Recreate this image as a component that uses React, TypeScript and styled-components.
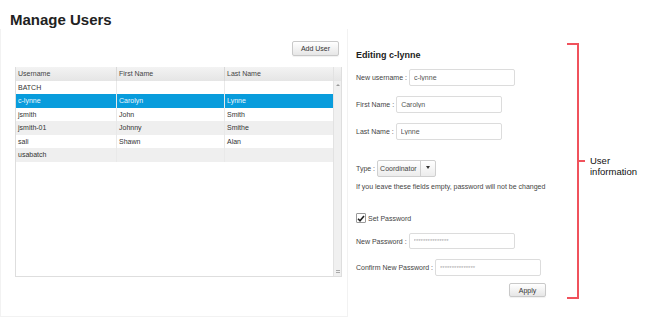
import styled, { createGlobalStyle } from "styled-components";

const GlobalStyle = createGlobalStyle`
  html, body {
    margin: 0;
    padding: 0;
    background: #fff;
  }
  body {
    font-family: "Liberation Sans", Arial, sans-serif;
    color: #333;
  }
  * {
    box-sizing: border-box;
  }
`;

const Page = styled.div`
  width: 653px;
  height: 317px;
  padding-top: 11px;
  overflow: hidden;
`;

const PageTitle = styled.h1`
  margin: 0 0 0 10px;
  font-size: 15px;
  line-height: 18px;
  font-weight: 700;
  color: #222;
`;

const Main = styled.div`
  display: flex;
  align-items: flex-start;
`;

const LeftPanel = styled.section`
  width: 348px;
  height: 288px;
  padding: 12px 7px 0 14px;
  border: 1px solid #f2f2f2;
  border-top: none;
`;

const Toolbar = styled.div`
  display: flex;
  justify-content: flex-end;
  padding-right: 1px;
  margin-bottom: 11px;
`;

const GreyButton = styled.button`
  height: ${(p) => p.$h || 15}px;
  width: ${(p) => p.$w}px;
  padding: 0;
  font-family: inherit;
  font-size: 7px;
  color: #333;
  background: linear-gradient(#ffffff, #e6e6e6);
  border: 1px solid #c9c9c9;
  border-radius: 2px;
  box-shadow: 0 1px 1px rgba(0, 0, 0, 0.06);
`;

const TableBox = styled.div`
  display: flex;
  width: 327px;
  height: 210px;
  border: 1px solid #dedede;
  border-top: none;
`;

const Grid = styled.div`
  width: 317px;
  display: flex;
  flex-direction: column;
`;

const Row = styled.div`
  display: grid;
  grid-template-columns: 101px 108px 108px;
  height: 13.5px;
  background: ${(p) =>
    p.$selected ? "#089cdc" : p.$odd ? "#efefef" : "#ffffff"};
  color: ${(p) => (p.$selected ? "#eaf6fc" : "#333")};
`;

const HeaderRow = styled(Row)`
  height: 13.7px;
  background: linear-gradient(#f3f3f3, #e5e5e5);
  color: #444;
`;

const Cell = styled.div`
  font-size: 7px;
  line-height: 13.5px;
  padding-left: 2px;
  white-space: nowrap;
  overflow: hidden;
  border-right: 1px solid ${(p) => (p.$head ? "#d9d9d9" : "#e9e9e9")};
  &:last-child {
    border-right: none;
  }
`;

const Scrollbar = styled.div`
  position: relative;
  width: 9px;
  background: #f0f0f0;
  border-left: 1px solid #e2e2e2;
`;

const ScrollTop = styled.div`
  height: 13.7px;
  background: linear-gradient(#f3f3f3, #e5e5e5);
`;

const ScrollArrowUp = styled.div`
  margin: 3px auto 0;
  width: 0;
  height: 0;
  border-left: 2px solid transparent;
  border-right: 2px solid transparent;
  border-bottom: 2px solid #999;
`;

const ScrollCorner = styled.div`
  position: absolute;
  left: 2px;
  bottom: 3px;
  width: 4px;
  height: 3px;
  border-top: 1px solid #aaa;
  border-bottom: 1px solid #aaa;
`;

const RightPanel = styled.section`
  width: 219px;
  padding: 20px 0 0 8px;
  display: flex;
  flex-direction: column;
`;

const Heading = styled.h2`
  margin: 0;
  font-size: 9px;
  line-height: 12px;
  font-weight: 700;
  color: #222;
`;

const FieldRow = styled.div`
  display: flex;
  align-items: center;
  gap: 2px;
  margin-top: ${(p) => p.$top}px;
  height: ${(p) => p.$h || 17}px;
  font-size: 7px;
  color: #444;
`;

const TextInput = styled.input`
  width: 106px;
  height: ${(p) => p.$h || 17}px;
  padding: 0 0 0 4px;
  font-family: inherit;
  font-size: ${(p) => (p.$secret ? 6 : 7)}px;
  color: ${(p) => (p.$secret ? "#aaa" : "#555")};
  border: 1px solid #dcdcdc;
  border-radius: 2px;
  outline: none;
  background: #fff;
`;

const Select = styled.div`
  display: flex;
  height: 17px;
  border: 1px solid #cfcfcf;
  border-radius: 2px;
  background: linear-gradient(#ffffff, #ececec);
`;

const SelectValue = styled.span`
  width: 42px;
  padding-left: 2px;
  line-height: 15px;
  color: #444;
`;

const SelectArrow = styled.span`
  width: 15px;
  border-left: 1px solid #cfcfcf;
  display: flex;
  justify-content: center;
  padding-top: 5px;
  &::after {
    content: "";
    width: 0;
    height: 0;
    border-left: 2.5px solid transparent;
    border-right: 2.5px solid transparent;
    border-top: 3px solid #333;
  }
`;

const Hint = styled.p`
  margin: 5px 0 0;
  font-size: 7px;
  line-height: 10px;
  color: #444;
`;

const CheckBox = styled.span`
  width: 10px;
  height: 10px;
  border: 1px solid #9a9a9a;
  border-radius: 1px;
  background: #fff;
  display: flex;
  align-items: center;
  justify-content: center;
`;

const Actions = styled.div`
  display: flex;
  justify-content: flex-end;
  margin-top: 7px;
  padding-right: 21px;
`;

const Annotation = styled.div`
  display: flex;
  align-items: flex-start;
  margin-top: 14px;
`;

const Bracket = styled.div`
  position: relative;
  width: 12px;
  height: 256px;
  border: 2px solid #f0525c;
  border-left: none;
  &::after {
    content: "";
    position: absolute;
    right: -8px;
    top: 115px;
    width: 6px;
    height: 2px;
    background: #f0525c;
  }
`;

const AnnotationLabel = styled.div`
  margin: 113px 0 0 11px;
  font-size: 9.5px;
  line-height: 10.5px;
  color: #111;
`;

const users = [
  { username: "BATCH", first: "", last: "" },
  { username: "c-lynne", first: "Carolyn", last: "Lynne" },
  { username: "jsmith", first: "John", last: "Smith" },
  { username: "jsmith-01", first: "Johnny", last: "Smithe" },
  { username: "sali", first: "Shawn", last: "Alan" },
  { username: "usabatch", first: "", last: "" },
];

const secret = "***************";

export default function App() {
  return (
    <Page>
      <GlobalStyle />
      <PageTitle>Manage Users</PageTitle>
      <Main>
        <LeftPanel>
          <Toolbar>
            <GreyButton $w={47}>Add User</GreyButton>
          </Toolbar>
          <TableBox>
            <Grid>
              <HeaderRow>
                <Cell $head>Username</Cell>
                <Cell $head>First Name</Cell>
                <Cell $head>Last Name</Cell>
              </HeaderRow>
              {users.map((u, i) => (
                <Row key={u.username} $odd={i % 2 === 1} $selected={u.username === "c-lynne"}>
                  <Cell>{u.username}</Cell>
                  <Cell>{u.first}</Cell>
                  <Cell>{u.last}</Cell>
                </Row>
              ))}
            </Grid>
            <Scrollbar>
              <ScrollTop />
              <ScrollArrowUp />
              <ScrollCorner />
            </Scrollbar>
          </TableBox>
        </LeftPanel>

        <RightPanel>
          <Heading>Editing c-lynne</Heading>
          <FieldRow $top={8}>
            New username :
            <TextInput readOnly value="c-lynne" />
          </FieldRow>
          <FieldRow $top={10}>
            First Name :
            <TextInput readOnly value="Carolyn" />
          </FieldRow>
          <FieldRow $top={10}>
            Last Name :
            <TextInput readOnly value="Lynne" />
          </FieldRow>
          <FieldRow $top={20}>
            Type :
            <Select>
              <SelectValue>Coordinator</SelectValue>
              <SelectArrow />
            </Select>
          </FieldRow>
          <Hint>If you leave these fields empty, password will not be changed</Hint>
          <FieldRow $top={21} $h={10}>
            <CheckBox>
              <svg width="8" height="7" viewBox="0 0 8 7">
                <path d="M1 3.8 L3 5.8 L7 1" fill="none" stroke="#222" strokeWidth="1.6" />
              </svg>
            </CheckBox>
            Set Password
          </FieldRow>
          <FieldRow $top={10} $h={16}>
            New Password :
            <TextInput readOnly value={secret} $secret $h={16} />
          </FieldRow>
          <FieldRow $top={10}>
            Confirm New Password :
            <TextInput readOnly value={secret} $secret />
          </FieldRow>
          <Actions>
            <GreyButton $w={37} $h={14}>Apply</GreyButton>
          </Actions>
        </RightPanel>

        <Annotation>
          <Bracket />
          <AnnotationLabel>
            User
            <br />
            information
          </AnnotationLabel>
        </Annotation>
      </Main>
    </Page>
  );
}
